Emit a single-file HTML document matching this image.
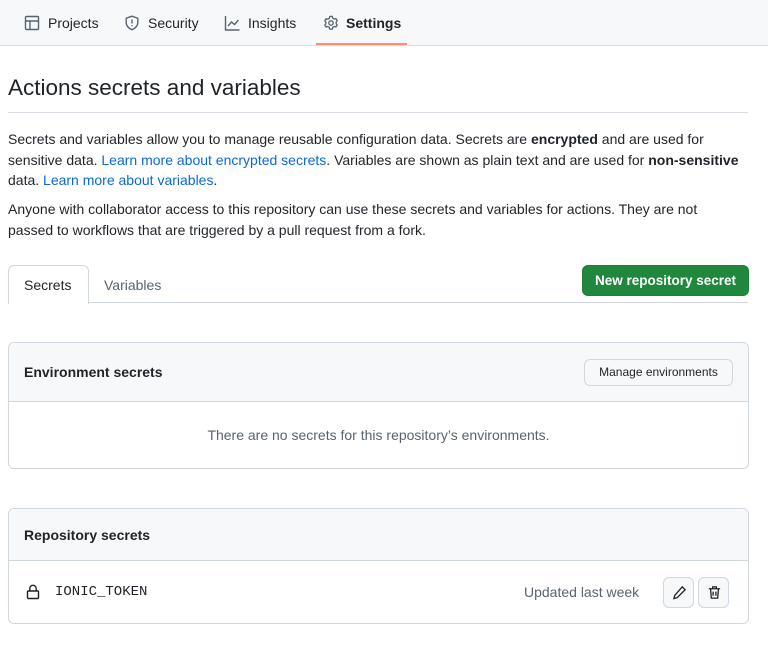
<!DOCTYPE html>
<html><head><style>
*{margin:0;padding:0;box-sizing:border-box}
body{width:768px;height:645px;background:#fff;font-family:"Liberation Sans",sans-serif;color:#1f2328;position:relative;overflow:hidden;font-size:14px}
.a{position:absolute;white-space:nowrap}
.nav{position:absolute;left:0;top:0;width:768px;height:46px;background:#f6f8fa;border-bottom:1px solid #d8dee4}
.ni{position:absolute;top:15px;font-size:14px;color:#1f2328}
svg{position:absolute}
a{color:#0969da;text-decoration:none}
p{position:absolute;left:8px;width:740px;font-size:14px;line-height:20.5px}
.box{position:absolute;left:8px;width:741px;border:1px solid #d0d7de;border-radius:6px;overflow:hidden}
.hd{background:#f6f8fa;border-bottom:1px solid #d0d7de;position:relative}
.btn{position:absolute;border:1px solid #d0d7de;border-radius:6px;background:#f6f8fa;font-size:12px;text-align:center}
</style></head><body>
<div class="nav">
<svg style="left:24px;top:15px" width="16" height="16" viewBox="0 0 16 16" fill="none" stroke="#59636e" stroke-width="1.4"><rect x="1.5" y="1.5" width="13" height="13" rx="1"/><path d="M1.5 6h13M6 6v8.5"/></svg>
<span class="ni" style="left:48px">Projects</span>
<svg style="left:124px;top:15px" width="16" height="16" viewBox="0 0 16 16" fill="none" stroke="#59636e" stroke-width="1.4"><path d="M8 1.2 2.2 3.2v4.3c0 3.4 2.6 5.8 5.8 7.2 3.2-1.4 5.8-3.8 5.8-7.2V3.2Z"/><path d="M8 4.5v4M8 10.3v1"/></svg>
<span class="ni" style="left:148px">Security</span>
<svg style="left:224px;top:15px" width="16" height="16" viewBox="0 0 16 16" fill="none" stroke="#59636e" stroke-width="1.4"><path d="M1.5 1v14h14M4 11l3.5-4 3 2.5L14.5 5"/></svg>
<span class="ni" style="left:248px">Insights</span>
<svg style="left:323px;top:15px" width="16" height="16" viewBox="0 0 16 16" fill="none" stroke="#59636e" stroke-width="1.3"><circle cx="8" cy="8" r="2.2"/><path d="M8 1.2l1.3.3.4 1.7 1.5.9 1.7-.5 1.3 1.9-1 1.4v1.8l1 1.4-1.3 1.9-1.7-.5-1.5.9-.4 1.7H6.7l-.4-1.7-1.5-.9-1.7.5-1.3-1.9 1-1.4V7.1l-1-1.4 1.3-1.9 1.7.5 1.5-.9.4-1.7Z"/></svg>
<span class="ni" style="left:346px;font-weight:bold">Settings</span>
<div class="a" style="left:316px;top:43px;width:91px;height:2px;background:#fd8c73"></div>
</div>
<div class="a" style="left:8px;top:75px;font-size:22.5px">Actions secrets and variables</div>
<div class="a" style="left:8px;top:112px;width:740px;height:1px;background:#d8dee4"></div>
<p style="top:129px">Secrets and variables allow you to manage reusable configuration data. Secrets are <b>encrypted</b> and are used for sensitive data. <a>Learn more about encrypted secrets</a>. Variables are shown as plain text and are used for <b>non-sensitive</b> data. <a>Learn more about variables</a>.</p>
<p style="top:199px;width:720px">Anyone with collaborator access to this repository can use these secrets and variables for actions. They are not passed to workflows that are triggered by a pull request from a fork.</p>
<div class="a" style="left:8px;top:265px;width:81px;height:39px;border:1px solid #d0d7de;border-bottom:none;border-radius:6px 6px 0 0;background:#fff;z-index:2"></div>
<div class="a" style="left:24px;top:277px;z-index:3">Secrets</div>
<div class="a" style="left:104px;top:277px;color:#59636e">Variables</div>
<div class="a" style="left:8px;top:302px;width:740px;height:1px;background:#d0d7de"></div>
<div class="a" style="left:582px;top:265px;width:167px;height:31px;background:#1f883d;border:1px solid #1a7f37;border-radius:6px;color:#fff;font-weight:bold;font-size:13.5px;text-align:center;line-height:29px">New repository secret</div>
<div class="box" style="top:342px;height:127px">
<div class="hd" style="height:59px"><span class="a" style="left:15px;top:21px;font-weight:bold">Environment secrets</span>
<div class="btn" style="left:575px;top:16px;width:149px;height:27px;line-height:25px">Manage environments</div></div>
<div style="text-align:center;padding-top:25px;color:#59636e">There are no secrets for this repository’s environments.</div>
</div>
<div class="box" style="top:508px;height:116px">
<div class="hd" style="height:52px"><span class="a" style="left:15px;top:18px;font-weight:bold">Repository secrets</span></div>
<svg style="left:17px;top:75px" width="14" height="16" viewBox="0 0 14 16" fill="none" stroke="#1f2328" stroke-width="1.4"><rect x="1.5" y="7" width="11" height="7.5" rx="1"/><path d="M3.8 7V4.5a3.2 3.2 0 0 1 6.4 0V7"/></svg>
<span class="a" style="left:46px;top:75px;font-family:'Liberation Mono',monospace;font-size:14px">IONIC_TOKEN</span>
<span class="a" style="left:515px;top:75px;color:#59636e">Updated last week</span>
<div class="btn" style="left:654px;top:68px;width:31px;height:31px"><svg style="left:8px;top:7px" width="15" height="15" viewBox="0 0 16 16" fill="none" stroke="#1f2328" stroke-width="1.4"><path d="M11 2l3 3-8.5 8.5L2 14.5l1-3.5Z"/></svg></div>
<div class="btn" style="left:689px;top:68px;width:31px;height:31px"><svg style="left:8px;top:7px" width="15" height="15" viewBox="0 0 16 16" fill="none" stroke="#1f2328" stroke-width="1.4"><path d="M2 4h12M6 4V2h4v2M3.8 4l.8 10h6.8l.8-10M6.5 7v4.5M9.5 7v4.5"/></svg></div>
</div>
</body></html>
